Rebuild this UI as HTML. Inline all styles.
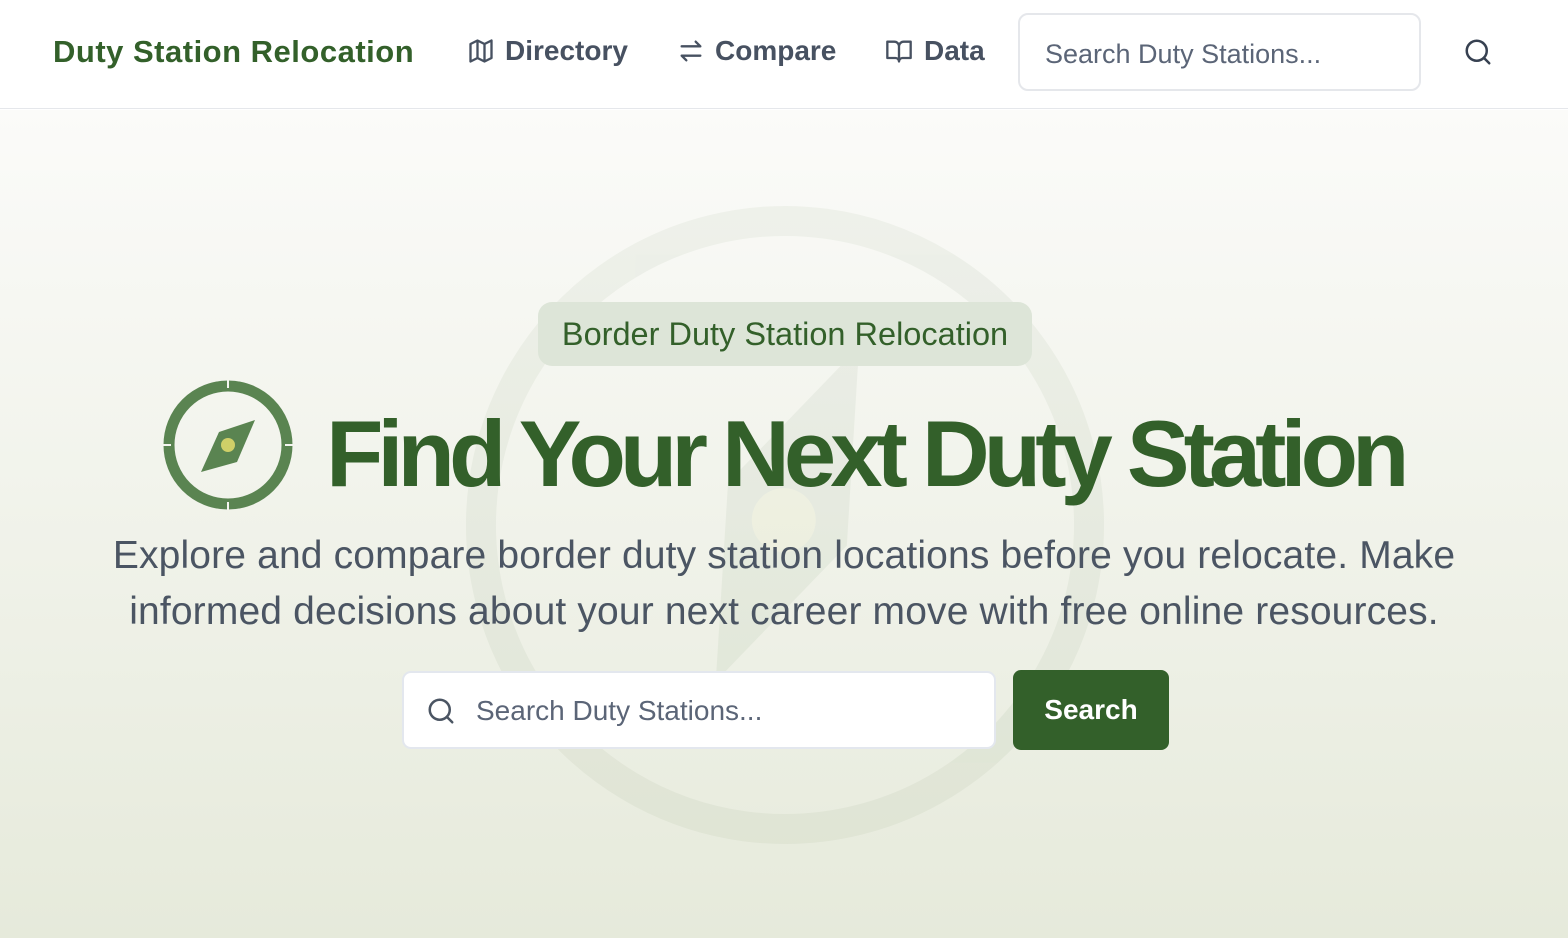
<!DOCTYPE html>
<html><head><meta charset="utf-8"><style>
*{box-sizing:border-box;margin:0;padding:0}
body{width:1568px;height:938px;overflow:hidden;font-family:"Liberation Sans",sans-serif;background:#fff;position:relative}
.nav{position:absolute;top:0;left:0;width:1568px;height:109px;border-bottom:1px solid #e5e7eb;background:#fff}
.logo{position:absolute;left:53px;top:34px;font-size:31px;font-weight:bold;color:#33602a;letter-spacing:0.5px}
.nl{position:absolute;top:35px;font-size:28px;font-weight:bold;color:#475161;display:flex;align-items:center;gap:10px}
.nsearch{position:absolute;left:1018px;top:13px;width:403px;height:78px;border:2px solid #e5e7eb;border-radius:10px;font-size:27px;color:#5b6577;padding:24px 0 0 25px}
.hero{position:absolute;top:110px;left:0;width:1568px;height:828px;background:linear-gradient(#fbfbf9,#e6eadb)}
.badge{position:absolute;left:538px;top:302px;width:494px;height:64px;border-radius:14px;background:#dde5d8;color:#33602a;font-size:32.5px;text-align:center;line-height:64px}
h1{position:absolute;left:326px;top:400px;font-size:94px;font-weight:bold;color:#33602a;letter-spacing:-6px;white-space:nowrap}
.sub{position:absolute;left:0;width:1568px;top:528px;text-align:center;font-size:39px;line-height:56px;color:#4b5563;letter-spacing:0.15px}
.sbox{position:absolute;left:402px;top:671px;width:594px;height:78px;background:#fff;border:2px solid #e3e7ee;border-radius:9px;font-size:28px;color:#5b6577;padding:22px 0 0 72px}
.btn{position:absolute;left:1013px;top:670px;width:156px;height:80px;background:#33602a;border-radius:8px;color:#fff;font-size:28px;font-weight:bold;text-align:center;line-height:80px}
</style></head><body>
<div class="hero"></div>
<svg style="position:absolute;left:0;top:0" width="1568" height="938">
<g opacity="0.05" transform="rotate(-14 785 525)">
<circle cx="785" cy="525" r="304" fill="none" stroke="#33602a" stroke-width="30"/>
<path d="M900 370 L840 560 L680 660 L740 470 Z" fill="#33602a"/>
<circle cx="785" cy="520" r="32" fill="#c8c840"/>
</g>
</svg>
<div class="nav">
<div class="logo">Duty Station Relocation</div>
<div class="nl" style="left:467px"><svg width="28" height="28" viewBox="0 0 24 24" fill="none" stroke="#475161" stroke-width="2" stroke-linejoin="round"><path d="M3 6l6-3 6 3 6-3v15l-6 3-6-3-6 3z M9 3v15 M15 6v15"/></svg>Directory</div>
<div class="nl" style="left:677px"><svg width="28" height="28" viewBox="0 0 24 24" fill="none" stroke="#475161" stroke-width="2" stroke-linecap="round" stroke-linejoin="round"><path d="M4 8h16l-4-4 M20 16H4l4 4"/></svg>Compare</div>
<div class="nl" style="left:884px"><svg width="30" height="28" viewBox="0 0 24 24" fill="none" stroke="#475161" stroke-width="2" stroke-linejoin="round"><path d="M2 4h6a4 4 0 0 1 4 4v13a3 3 0 0 0-3-3H2z M22 4h-6a4 4 0 0 0-4 4v13a3 3 0 0 1 3-3h7z"/></svg>Data</div>
<div class="nsearch">Search Duty Stations...</div>
<svg style="position:absolute;left:1463px;top:37px" width="30" height="30" viewBox="0 0 24 24" fill="none" stroke="#374151" stroke-width="2" stroke-linecap="round"><circle cx="11" cy="11" r="8"/><path d="M21 21l-4.3-4.3"/></svg>
</div>
<div class="badge">Border Duty Station Relocation</div>
<svg style="position:absolute;left:163px;top:380px" width="130" height="130" viewBox="0 0 130 130">
<circle cx="65" cy="65" r="59" fill="none" stroke="#5a8451" stroke-width="11"/>
<path d="M65 0v8 M65 122v8 M0 65h8 M122 65h8" stroke="#f4f5f0" stroke-width="2"/>
<path d="M92 40 L74 82 L38 92 L56 52 Z" fill="#5a8451"/>
<circle cx="65" cy="65" r="7" fill="#cfcf68"/>
</svg>
<h1>Find Your Next Duty Station</h1>
<div class="sub">Explore and compare border duty station locations before you relocate. Make<br>informed decisions about your next career move with free online resources.</div>
<div class="sbox">Search Duty Stations...</div>
<svg style="position:absolute;left:426px;top:696px" width="30" height="30" viewBox="0 0 24 24" fill="none" stroke="#4b5563" stroke-width="2" stroke-linecap="round"><circle cx="11" cy="11" r="8"/><path d="M21 21l-4.3-4.3"/></svg>
<div class="btn">Search</div>
</body></html>
